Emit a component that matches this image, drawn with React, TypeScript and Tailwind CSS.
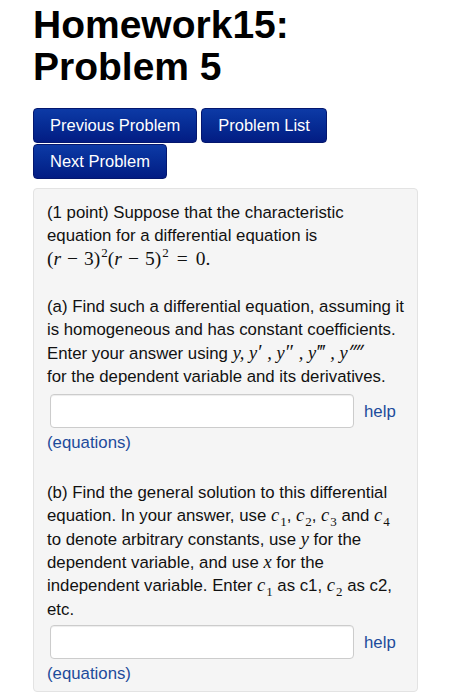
import React from "react";

const sans = { fontFamily: '"Liberation Sans", Arial, sans-serif' };
const serif = { fontFamily: '"Liberation Serif", "Times New Roman", serif' };

function I({ children }: { children: React.ReactNode }) {
  return (
    <span className="italic text-[18.5px]" style={serif}>
      {children}
    </span>
  );
}

function M({ children }: { children: React.ReactNode }) {
  return (
    <span className="text-[19.5px]" style={serif}>
      {children}
    </span>
  );
}

function Sub({ n }: { n: string }) {
  return <span className="not-italic relative top-[5px] text-[13px] ml-[1px]">{n}</span>;
}

function Sup({ n }: { n: string }) {
  return <span className="relative top-[-8px] text-[13px] ml-[1px]">{n}</span>;
}

function P({ n }: { n: string }) {
  return <span className="text-[20px] not-italic ml-[1px]">{n}</span>;
}

function Btn({ children }: { children: React.ReactNode }) {
  return (
    <button className="h-[35px] px-[16px] rounded-[4px] border border-[#04176e] bg-gradient-to-b from-[#0d3aa6] to-[#031c83] text-white text-[16.5px] leading-none">
      {children}
    </button>
  );
}

function Answer({ top }: { top: string }) {
  return (
    <div className={`flex items-center ml-[3px] ${top}`}>
      <div className="w-[304px] h-[34px] bg-white border border-[#cccccc] rounded-[4px] shadow-[inset_0_1px_1px_rgba(0,0,0,0.075)]" />
      <span className="ml-[10px] text-[#1d4b9b]">help</span>
    </div>
  );
}

export default function App() {
  return (
    <div className="bg-white w-[451px] min-h-[700px] px-[33px] text-black" style={sans}>
      <h1 className="pt-[4px] text-[39px] leading-[42px] font-bold whitespace-nowrap">
        Homework15:
        <br />
        Problem 5
      </h1>
      <div className="mt-[20px] flex flex-wrap gap-x-[4px] gap-y-[1px]">
        <Btn>Previous Problem</Btn>
        <Btn>Problem List</Btn>
        <Btn>Next Problem</Btn>
      </div>
      <div className="mt-[9px] bg-[#f5f5f5] border border-[#e3e3e3] rounded-[4px] px-[13px] pt-[12px] pb-[6px] text-[16.8px] leading-[23px] text-[#111] whitespace-nowrap">
        <p>
          (1 point) Suppose that the characteristic
          <br />
          equation for a differential equation is
          <br />
          <M>
            (<span className="italic">r</span>
            <span className="mx-[6px]">−</span>3)<Sup n="2" />(<span className="italic">r</span>
            <span className="mx-[6px]">−</span>5)<Sup n="2" />
            <span className="mx-[8px]">=</span>0.
          </M>
        </p>
        <p className="mt-[23px]">
          (a) Find such a differential equation, assuming it
          <br />
          is homogeneous and has constant coefficients.
          <br />
          Enter your answer using{" "}
          <I>
            y, y<P n="′" /> , y<P n="″" /> , y<P n="‴" /> , y<P n="⁗" />
          </I>
          <br />
          for the dependent variable and its derivatives.
        </p>
        <Answer top="mt-[6px]" />
        <div className="text-[#1d4b9b] mt-[3px]">(equations)</div>
        <p className="mt-[27px]">
          (b) Find the general solution to this differential
          <br />
          equation. In your answer, use <I>c<Sub n="1" /></I>, <I>c<Sub n="2" /></I>, <I>c<Sub n="3" /></I> and{" "}
          <I>c<Sub n="4" /></I>
          <br />
          to denote arbitrary constants, use <I>y</I> for the
          <br />
          dependent variable, and use <I>x</I> for the
          <br />
          independent variable. Enter <I>c<Sub n="1" /></I> as c1, <I>c<Sub n="2" /></I> as c2,
          <br />
          etc.
        </p>
        <Answer top="mt-[4px]" />
        <div className="text-[#1d4b9b] mt-[3px]">(equations)</div>
      </div>
    </div>
  );
}
